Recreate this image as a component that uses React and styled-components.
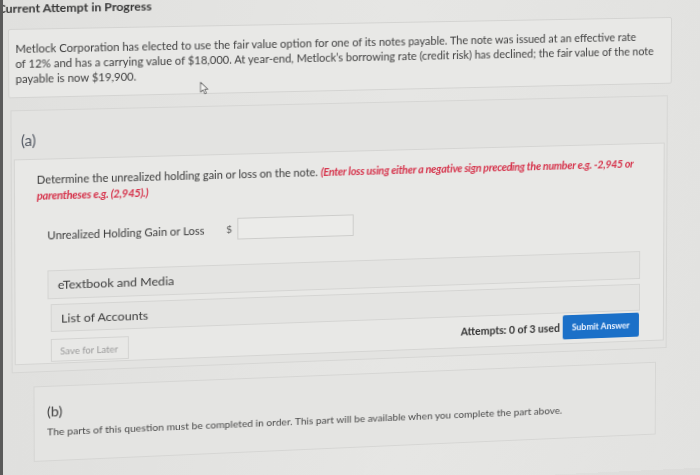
import { createGlobalStyle, styled } from 'styled-components';

const Global = createGlobalStyle`
	html, body {
		margin: 0;
		padding: 0;
		background: #e2e2e0;
	}
	body {
		font-family: Lato, "Open Sans", sans-serif;
		color: #3a3a3a;
	}
`;

// the reference is a photo of a monitor, so the sheet is drawn flat and then
// projected to match the camera angle (right side higher and slightly further away)
const CAMERA = 'matrix3d(1.0415, -0.018822, 0, 0.0000625, 0.004669, 1.006186, 0, 0.00001435, 0, 0, 1, 0, 0, 0, 0, 1)';

const App = () => {
	return (
		<Frame>
			<Global />
			<Sheet>
				<Heading>Current Attempt in Progress</Heading>
				<Problem>
					<ProblemText>
						Metlock Corporation has elected to use the fair value option for one of its notes payable. The note was issued at an effective rate
						<br />
						of 12% and has a carrying value of $18,000. At year-end, Metlock’s borrowing rate (credit risk) has declined; the fair value of the note
						<br />
						payable is now $19,900.
					</ProblemText>
					<Cursor viewBox="0 0 11 15">
						<path d="M1 1 L1 12 L3.6 9.6 L5.6 14 L7.4 13.2 L5.4 8.9 L9 8.9 Z" fill="#f4f4f2" stroke="#6a6a6a" strokeWidth="0.9" strokeLinejoin="round" />
					</Cursor>
				</Problem>

				<PartA>
					<PartLabel>(a)</PartLabel>
					<PartBody>
						<Question>
							Determine the unrealized holding gain or loss on the note.{' '}
							<Hint>(Enter loss using either a negative sign preceding the number e.g. -2,945 or</Hint>
							<br />
							<Hint>parentheses e.g. (2,945).)</Hint>
						</Question>
						<AnswerRow>
							<AnswerLabel>Unrealized Holding Gain or Loss</AnswerLabel>
							<Dollar>$</Dollar>
							<Input />
						</AnswerRow>
						<Resources>
							<Resource $width={595} $height={29}>eTextbook and Media</Resource>
							<Resource $width={592} $height={28} $indent={3}>List of Accounts</Resource>
						</Resources>
						<Footer>
							<SaveButton>Save for Later</SaveButton>
							<Submit>
								<Attempts>Attempts: 0 of 3 used</Attempts>
								<SubmitButton>Submit Answer</SubmitButton>
							</Submit>
						</Footer>
					</PartBody>
				</PartA>

				<PartB>
					<PartLabel $b>(b)</PartLabel>
					<Locked>The parts of this question must be completed in order. This part will be available when you complete the part above.</Locked>
				</PartB>
			</Sheet>
		</Frame>
	);
};

const Frame = styled.div`
	position: relative;
	width: 700px;
	height: 475px;
	overflow: hidden;
	background: linear-gradient(90deg, #dfdfdd 0%, #e4e4e2 55%, #dcdcda 100%);

	&::before {
		content: '';
		position: absolute;
		left: 0;
		top: 0;
		bottom: 0;
		width: 3px;
		background: #5a5a5a;
		z-index: 2;
	}
`;

const Sheet = styled.div`
	width: 720px;
	height: 500px;
	transform-origin: 8px 29px;
	transform: ${CAMERA};
	background: linear-gradient(90deg, #e0e0de 0%, #e6e6e4 55%, #e2e2e0 100%);
`;

const Heading = styled.div`
	height: 27px;
	padding-top: 2px;
	margin-left: -2px;
	font-size: 12px;
	font-weight: 700;
	line-height: 14px;
	color: #363636;
`;

const Problem = styled.div`
	position: relative;
	width: 664px;
	height: 69px;
	margin-left: 8px;
	box-sizing: border-box;
	border: 1px solid #d4d4d2;
	border-radius: 2px;
	background: #e8e8e6;
	padding: 11px 0 0 6px;
`;

const ProblemText = styled.p`
	margin: 0;
	font-size: 11px;
	line-height: 15px;
	color: #3e3e3e;
	white-space: nowrap;
`;

const Cursor = styled.svg`
	position: absolute;
	left: 185px;
	top: 55px;
	width: 10px;
	height: 14px;
`;

const PartA = styled.div`
	width: 658px;
	height: 263px;
	margin: 12px 0 0 10px;
	box-sizing: border-box;
	border: 1px solid #d6d6d4;
	background: #e3e3e1;
	display: flex;
	flex-direction: column;
`;

const PartLabel = styled.div`
	font-size: ${(p) => (p.$b ? '14px' : '14.5px')};
	line-height: ${(p) => (p.$b ? '15px' : '16px')};
	color: ${(p) => (p.$b ? '#3e3e3e' : '#4f5560')};
	padding: ${(p) => (p.$b ? '0' : '22px 0 0 9px')};
	margin-bottom: ${(p) => (p.$b ? '6px' : '10px')};
`;

const PartBody = styled.div`
	width: 652px;
	height: 206px;
	margin-left: 2px;
	box-sizing: border-box;
	border: 1px solid #d5d5d3;
	background: #e8e8e6;
	padding: 12px 0 0 21px;
	display: flex;
	flex-direction: column;
`;

const Question = styled.p`
	margin: 0;
	font-size: 10.9px;
	line-height: 16px;
	color: #3a3a3a;
	white-space: nowrap;
`;

const Hint = styled.span`
	color: #d6354d;
	font-weight: 700;
	font-style: italic;
	letter-spacing: -0.28px;
`;

const AnswerRow = styled.div`
	display: flex;
	align-items: center;
	height: 22px;
	margin-top: 20px;
	padding-left: 10px;
`;

const AnswerLabel = styled.span`
	width: 175px;
	font-size: 11px;
	color: #3d3d3d;
`;

const Dollar = styled.span`
	width: 11px;
	font-size: 10px;
	color: #5a5a5a;
`;

const Input = styled.div`
	width: 116px;
	height: 22px;
	box-sizing: border-box;
	border: 1px solid #cdcdcb;
	background: #ebebe9;
`;

const Resources = styled.div`
	display: flex;
	flex-direction: column;
	gap: 5px;
	margin: 25px 0 0 10px;
`;

const Resource = styled.div`
	width: ${(p) => p.$width}px;
	height: ${(p) => p.$height}px;
	margin-left: ${(p) => p.$indent || 0}px;
	box-sizing: border-box;
	border: 1px solid #d5d5d3;
	background: #e4e4e2;
	padding-left: 9px;
	display: flex;
	align-items: center;
	font-size: 12.2px;
	color: #3c3c3c;
`;

const Footer = styled.div`
	display: flex;
	justify-content: space-between;
	align-items: flex-end;
	width: 591px;
	height: 28px;
	margin: 2px 0 0 13px;
`;

const SaveButton = styled.button`
	width: 76px;
	height: 23px;
	box-sizing: border-box;
	border: 1px solid #d4d4d2;
	background: #e8e8e6;
	padding: 1px 0 0 8px;
	text-align: left;
	font-family: Lato, sans-serif;
	font-size: 9.3px;
	color: #9a9a9a;
`;

const Submit = styled.div`
	display: flex;
	align-items: center;
	gap: 3px;
	height: 25px;
	margin-bottom: 3px;
`;

const Attempts = styled.span`
	font-size: 10.7px;
	font-weight: 700;
	color: #333;
`;

const SubmitButton = styled.button`
	width: 79px;
	height: 25px;
	border: none;
	border-radius: 2px;
	background: #1b70c8;
	color: #eef4ff;
	font-family: Lato, sans-serif;
	font-size: 8.9px;
	font-weight: 700;
	padding: 0;
`;

const PartB = styled.div`
	width: 626px;
	height: 76px;
	margin: 14px 0 0 31px;
	box-sizing: border-box;
	border: 1px solid #d6d6d4;
	background: #e4e4e2;
	padding: 17px 0 0 12px;
`;

const Locked = styled.div`
	font-size: 10.2px;
	line-height: 15px;
	color: #4a4a4a;
	white-space: nowrap;
`;

export default App;
